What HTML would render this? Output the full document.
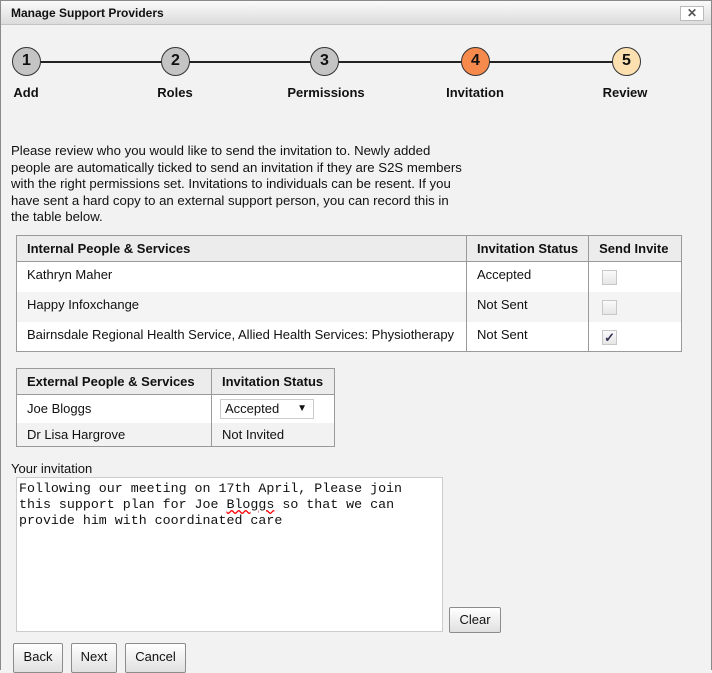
<!DOCTYPE html>
<html><head><style>
*{box-sizing:border-box;margin:0;padding:0}
body{width:712px;height:670px;overflow:hidden;background:#f2f2f2;font-family:"Liberation Sans",Arial,sans-serif;font-size:13px;color:#111;position:relative}
.abs{position:absolute}
.frame{left:0;top:0;width:712px;height:670px;border:1px solid #8a8a8a;border-bottom:none}
.title{left:1px;top:1px;width:710px;height:24px;background:linear-gradient(#fafafa,#dcdcdc);border-bottom:1px solid #c4c4c4;font-weight:bold;font-size:12px;padding:5px 10px}
.close{left:680px;top:6px;width:24px;height:15px;background:#fff;border:1px solid #bbb;font-size:12px;font-weight:bold;text-align:center;line-height:13px;color:#555}
.circ{width:29px;height:29px;border-radius:50%;border:1.5px solid #333;font-weight:bold;font-size:16px;text-align:center;line-height:26px;top:47px}
.lbl{font-weight:bold;top:85px;font-size:13px;width:120px;text-align:center}
table{border-collapse:collapse;position:absolute;font-size:13px}
td,th{border:1px solid #9a9a9a;padding:0 10px;text-align:left;white-space:nowrap}
th{background:#ececec;font-weight:bold;border-bottom:1px solid #9a9a9a}
td{border-top:none;border-bottom:none}
.t1 td{vertical-align:top;padding-top:5px}
.cb{display:inline-block;width:15px;height:15px;border:1px solid #c8c8c8;background:linear-gradient(#fafafa,#e6e6e6);vertical-align:middle;margin-top:3px}
.btn{border:1px solid #8c8c8c;background:linear-gradient(#fff,#e0e0e0);text-align:center;font-size:13px;line-height:26px;border-radius:2px}
</style></head><body>
<div class="abs frame"></div>
<div class="abs title">Manage Support Providers</div>
<div class="abs close">✕</div>
<div class="abs" style="left:26px;top:61px;width:600px;height:1.5px;background:#222"></div>
<div class="abs circ" style="left:12px;background:#c4c4c4">1</div>
<div class="abs circ" style="left:161px;background:#c4c4c4">2</div>
<div class="abs circ" style="left:310px;background:#c4c4c4">3</div>
<div class="abs circ" style="left:461px;background:#f58a4c">4</div>
<div class="abs circ" style="left:612px;background:#fde0b0">5</div>
<div class="abs lbl" style="left:-34px">Add</div>
<div class="abs lbl" style="left:115px">Roles</div>
<div class="abs lbl" style="left:266px">Permissions</div>
<div class="abs lbl" style="left:415px">Invitation</div>
<div class="abs lbl" style="left:565px">Review</div>
<div class="abs" style="left:11px;top:143px;white-space:nowrap;line-height:16.5px;font-size:13.2px">Please review who you would like to send the invitation to. Newly added<br>people are automatically ticked to send an invitation if they are S2S members<br>with the right permissions set. Invitations to individuals can be resent. If you<br>have sent a hard copy to an external support person, you can record this in<br>the table below.</div>
<table class="t1" style="left:16px;top:235px;width:666px">
<tr style="height:26px"><th style="width:450px">Internal People &amp; Services</th><th style="width:121px">Invitation Status</th><th>Send Invite</th></tr>
<tr style="height:30px;background:#fff"><td>Kathryn Maher</td><td>Accepted</td><td style="padding-left:13px"><span class="cb"></span></td></tr>
<tr style="height:30px;background:#f4f4f4"><td>Happy Infoxchange</td><td>Not Sent</td><td style="padding-left:13px"><span class="cb"></span></td></tr>
<tr style="height:30px;background:#fff;border-bottom:1px solid #9a9a9a"><td>Bairnsdale Regional Health Service, Allied Health Services: Physiotherapy</td><td>Not Sent</td><td style="padding-left:13px"><span class="cb" style="color:#335;font-size:13px;line-height:13px;text-align:center;font-weight:bold">✓</span></td></tr>
</table>
<table style="left:16px;top:368px;width:319px">
<tr style="height:26px"><th style="width:195px">External People &amp; Services</th><th>Invitation Status</th></tr>
<tr style="height:28px;background:#fff"><td>Joe Bloggs</td><td style="padding-left:8px"><div style="width:94px;height:20px;border:1px solid #ccc;background:#fff;font-size:13px;line-height:18px;padding-left:4px;position:relative">Accepted<span style="position:absolute;right:6px;top:0;font-size:10px">▼</span></div></td></tr>
<tr style="height:24px;background:#f2f2f2;border-bottom:1px solid #9a9a9a"><td>Dr Lisa Hargrove</td><td>Not Invited</td></tr>
</table>
<div class="abs" style="left:11px;top:461px">Your invitation</div>
<div class="abs" style="left:16px;top:477px;width:427px;height:155px;background:#fff;border:1px solid #ccc;font-family:'Liberation Mono',monospace;font-size:13.3px;line-height:16px;padding:3px 2px">Following our meeting on 17th April, Please join<br>this support plan for Joe <span style="text-decoration:underline wavy red">Bloggs</span> so that we can<br>provide him with coordinated care</div>
<div class="abs btn" style="left:449px;top:607px;width:52px;height:26px;line-height:24px">Clear</div>
<div class="abs btn" style="left:13px;top:643px;width:50px;height:30px">Back</div>
<div class="abs btn" style="left:71px;top:643px;width:46px;height:30px">Next</div>
<div class="abs btn" style="left:125px;top:643px;width:61px;height:30px">Cancel</div>
</body></html>
